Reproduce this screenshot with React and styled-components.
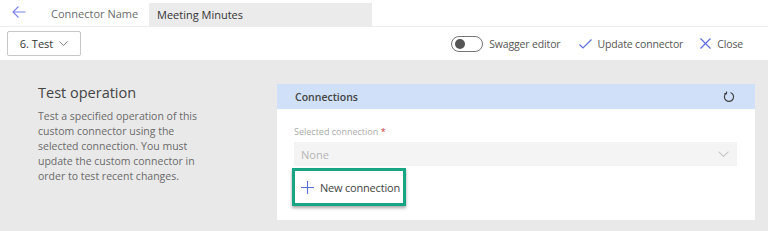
import React from 'react';
import styled, { createGlobalStyle } from 'styled-components';

const GlobalStyles = createGlobalStyle`
  html, body {
    margin: 0;
    padding: 0;
    background: #fff;
    font-family: "Open Sans", "Noto Sans", "Liberation Sans", sans-serif;
  }
`;

const Page = styled.div`
  width: 768px;
  height: 231px;
  display: flex;
  flex-direction: column;
  overflow: hidden;
`;

const TopBar = styled.header`
  height: 27px;
  display: flex;
  align-items: flex-end;
  border-bottom: 1px solid #ededed;
  box-sizing: border-box;
`;

const BackButton = styled.button`
  width: 26px;
  height: 26px;
  margin-left: 6px;
  border: none;
  background: none;
  padding: 0;
  display: flex;
  align-items: center;
  justify-content: center;
  align-self: center;
  margin-top: -2px;
`;

const NameLabel = styled.span`
  font-size: 11px;
  color: #6b6b6b;
  margin-left: 19px;
  width: 98px;
  align-self: center;
`;

const NameTab = styled.div`
  width: 223px;
  height: 23px;
  background: #ebebeb;
  font-size: 11px;
  color: #333;
  display: flex;
  align-items: center;
  padding-left: 8px;
  box-sizing: border-box;
`;

const Toolbar = styled.div`
  height: 33px;
  display: flex;
  align-items: center;
  padding: 0 25px 0 7px;
`;

const StepButton = styled.button`
  width: 74px;
  height: 25px;
  border: 1px solid #c8c8c8;
  background: #fff;
  border-radius: 2px;
  font-family: inherit;
  font-size: 11px;
  color: #333;
  display: flex;
  align-items: center;
  justify-content: center;
  gap: 6px;
  padding: 0;
`;

const Spacer = styled.div`
  flex: 1;
`;

const ToolItem = styled.div`
  display: flex;
  align-items: center;
  gap: ${p => p.$gap || 6}px;
  margin-left: ${p => p.$ml || 0}px;
  font-size: 10.5px;
  letter-spacing: -0.15px;
  color: #555;
`;

const Toggle = styled.div`
  width: 30px;
  height: 14px;
  border: 1px solid #777;
  border-radius: 8px;
  position: relative;
  &::after {
    content: '';
    position: absolute;
    left: 3px;
    top: 2px;
    width: 10px;
    height: 10px;
    border-radius: 50%;
    background: #555;
  }
`;

const Main = styled.main`
  flex: 1;
  background: #e9e9e9;
  display: flex;
  padding-top: 24px;
`;

const Intro = styled.section`
  width: 277px;
  padding-left: 38px;
  box-sizing: border-box;
`;

const Heading = styled.h2`
  margin: 0;
  font-size: 14.5px;
  font-weight: 400;
  color: #444;
  line-height: 20px;
  margin-top: -1px;
`;

const Description = styled.p`
  margin: 6px 0 0;
  font-size: 10.5px;
  line-height: 15px;
  color: #6a6a6a;
  width: 175px;
`;

const Card = styled.section`
  width: 478px;
  height: 136px;
  background: #fff;
  display: flex;
  flex-direction: column;
`;

const CardHeader = styled.div`
  height: 25px;
  background: #cfe0f8;
  display: flex;
  align-items: center;
  justify-content: space-between;
  padding: 0 20px 0 18px;
  font-size: 10.5px;
  font-weight: 600;
  color: #444;
`;

const CardBody = styled.div`
  padding: 16px 18px 0 17px;
  display: flex;
  flex-direction: column;
`;

const FieldLabel = styled.label`
  font-size: 9px;
  color: #aaa;
  line-height: 14px;
  span {
    color: #d13438;
  }
`;

const Select = styled.div`
  margin-top: 3px;
  height: 24px;
  background: #f4f4f4;
  display: flex;
  align-items: center;
  justify-content: space-between;
  padding: 0 8px 0 7px;
  font-size: 11px;
  color: #b5b5b5;
`;

const NewConnection = styled.button`
  margin-top: 2px;
  margin-left: -2px;
  align-self: flex-start;
  width: 114px;
  height: 38px;
  border: 3px solid #17a584;
  background: #fff;
  box-shadow: 0 2px 3px rgba(0, 0, 0, 0.35);
  display: flex;
  align-items: center;
  gap: 6px;
  padding: 0 0 0 6px;
  box-sizing: border-box;
  font-family: inherit;
  font-size: 11px;
  letter-spacing: -0.2px;
  color: #444;
  white-space: nowrap;
`;

const Arrow = () => (
  <svg width="14" height="12" viewBox="0 0 14 12" fill="none" stroke="#7b83eb" strokeWidth="1.1">
    <path d="M13.5 6H1M6.5 0.5L1 6l5.5 5.5" />
  </svg>
);

const Chevron = ({ color = '#666', size = 10 }) => (
  <svg width={size} height={size * 0.6} viewBox="0 0 10 6" fill="none" stroke={color} strokeWidth="1">
    <path d="M0.5 0.5L5 5l4.5-4.5" />
  </svg>
);

const Check = () => (
  <svg width="13" height="10" viewBox="0 0 13 10" fill="none" stroke="#5b6ee0" strokeWidth="1.2">
    <path d="M0.5 5.5L4 9l8.5-8.5" />
  </svg>
);

const Cross = () => (
  <svg width="11" height="11" viewBox="0 0 11 11" fill="none" stroke="#5b6ee0" strokeWidth="1.2">
    <path d="M0.5 0.5l10 10M10.5 0.5l-10 10" />
  </svg>
);

const Refresh = () => (
  <svg width="12" height="12" viewBox="0 0 12 12" fill="none" stroke="#444" strokeWidth="1.2">
    <path d="M3.2 2.2A4.6 4.6 0 1 0 7.5 1.5" />
    <path d="M3.5 0.5v2.2H1.3" />
  </svg>
);

const Plus = () => (
  <svg width="13" height="13" viewBox="0 0 13 13" fill="none" stroke="#5b6ee0" strokeWidth="1.1">
    <path d="M6.5 0v13M0 6.5h13" />
  </svg>
);

const App = () => {
  return (
    <Page>
      <GlobalStyles />
      <TopBar>
        <BackButton aria-label="Back"><Arrow /></BackButton>
        <NameLabel>Connector Name</NameLabel>
        <NameTab>Meeting Minutes</NameTab>
      </TopBar>
      <Toolbar>
        <StepButton>6. Test <Chevron color="#777" size={9} /></StepButton>
        <Spacer />
        <ToolItem $gap={6}><Toggle />Swagger editor</ToolItem>
        <ToolItem $ml={19} $gap={5}><Check />Update connector</ToolItem>
        <ToolItem $ml={17} $gap={6}><Cross />Close</ToolItem>
      </Toolbar>
      <Main>
        <Intro>
          <Heading>Test operation</Heading>
          <Description>
            Test a specified operation of this custom connector using the selected connection. You must update the custom connector in order to test recent changes.
          </Description>
        </Intro>
        <Card>
          <CardHeader>
            Connections
            <Refresh />
          </CardHeader>
          <CardBody>
            <FieldLabel>Selected connection <span>*</span></FieldLabel>
            <Select>
              None
              <Chevron color="#c8c8c8" size={11} />
            </Select>
            <NewConnection><Plus />New connection</NewConnection>
          </CardBody>
        </Card>
      </Main>
    </Page>
  );
};

export default App;
